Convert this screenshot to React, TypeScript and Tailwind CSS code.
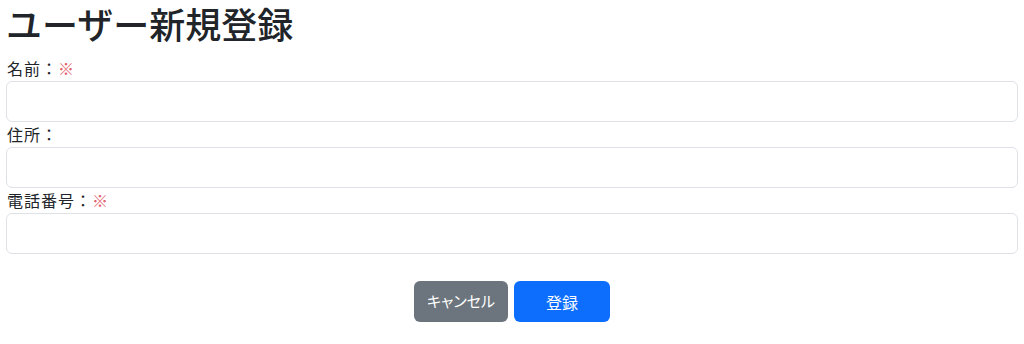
const fieldClass =
  "block h-[41px] w-full rounded-[6px] border border-[#dee2e6] bg-white px-3 text-[16px] text-[#212529] outline-none";

const Field = ({ label, required }: { label: string; required?: boolean }) => (
  <div>
    <label className="block h-[25px] pl-[1px] text-[16px] leading-[25px] tracking-[1px] text-[#212529]">
      {label}：{required && <span className="text-[#e35d6a]">※</span>}
    </label>
    <input type="text" className={fieldClass} />
  </div>
);

export default function App() {
  return (
    <div
      className="min-h-screen bg-white px-[6px]"
      style={{ fontFamily: '"Noto Sans CJK JP", "Noto Sans", sans-serif' }}
    >
      <h1 className="mb-[9px] text-[36px] font-medium leading-[47px] text-[#212529]">
        ユーザー新規登録
      </h1>
      <form className="flex flex-col">
        <Field label="名前" required />
        <Field label="住所" />
        <Field label="電話番号" required />
        <div className="mt-[27px] flex justify-center gap-[6px]">
          <button
            type="button"
            className="h-[41px] w-[94px] rounded-[6px] bg-[#6c757d] text-[15px] text-white [font-feature-settings:'palt']"
          >
            キャンセル
          </button>
          <button
            type="submit"
            className="h-[41px] w-[96px] rounded-[6px] bg-[#0d6efd] text-[16px] text-white"
          >
            登録
          </button>
        </div>
      </form>
    </div>
  );
}
